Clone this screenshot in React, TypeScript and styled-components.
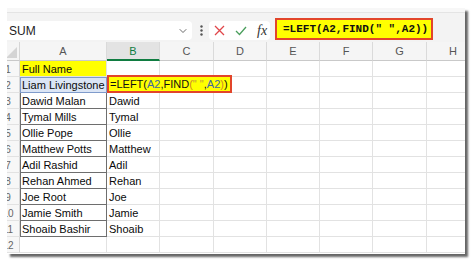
import { FC } from 'react';
import styled, { createGlobalStyle } from 'styled-components';
import { ChevronDown } from 'lucide-react';

const GlobalStyle = createGlobalStyle`
  html, body {
    margin: 0;
    padding: 0;
    background: #ffffff;
  }
  body {
    font-family: "Liberation Sans", Arial, sans-serif;
    width: 474px;
    height: 264px;
    overflow: hidden;
  }
`;

const GRID_LINE = '#e2e2e2';
const BOX_LINE = '#6e6e6e';

const Frame = styled.div`
  margin: 8px 0 0 7px;
  width: 458px;
  height: 246px;
  background: #ffffff;
  overflow: hidden;
  box-shadow: 3px 3px 2px rgba(0, 0, 0, 0.6);
`;

const TopStrip = styled.div`
  height: 4px;
  background: #f7f7f7;
  border-bottom: 1px solid #e4e4e4;
`;

const Toolbar = styled.div`
  display: flex;
  align-items: flex-end;
  height: 29px;
  box-sizing: border-box;
  padding-bottom: 2px;
  background: #f3f3f3;
`;

const NameBox = styled.div`
  display: flex;
  align-items: center;
  justify-content: space-between;
  margin-left: -6px;
  width: 191px;
  height: 19px;
  box-sizing: border-box;
  padding: 0 3px 0 8px;
  background: #ffffff;
  border-radius: 4px;
  font-size: 12px;
  color: #222;
`;

const Dots = styled.div`
  display: flex;
  align-items: center;
  justify-content: center;
  width: 6px;
  height: 19px;
  margin-left: 6px;
`;

const ActionBox = styled.div`
  display: flex;
  align-items: center;
  margin-left: 5px;
  width: 61px;
  height: 19px;
  box-sizing: border-box;
  padding-left: 5px;
  gap: 10px;
  background: #ffffff;
  border-radius: 4px;
`;

const Fx = styled.span`
  font-family: "Liberation Serif", "Times New Roman", serif;
  font-style: italic;
  font-size: 14px;
  color: #333;
  line-height: 1;
`;

const FormulaInput = styled.div`
  display: flex;
  align-items: center;
  margin-left: 5px;
  width: 158px;
  height: 22px;
  box-sizing: border-box;
  padding-left: 6px;
  background: #ffff00;
  border: 2px solid #e2452a;
  font-family: "Liberation Mono", "Courier New", monospace;
  font-weight: bold;
  font-size: 11px;
  color: #111;
  white-space: pre;
`;

const Sheet = styled.div`
  display: grid;
  grid-template-columns: 23px 87px 53px 54px 53px 53px 53px 54px 53px;
  grid-template-rows: 19px repeat(12, 16px);
  margin-left: -10px;
  width: 483px;
`;

const Corner = styled.div`
  position: relative;
  background: #f5f5f5;
  border-right: 1px solid #d6d6d6;
  border-bottom: 1px solid #c9c9c9;

  &::after {
    content: '';
    position: absolute;
    right: 2px;
    bottom: 2px;
    border-left: 11px solid transparent;
    border-bottom: 11px solid #d4d4d4;
  }
`;

const ColHead = styled.div<{ $active?: boolean }>`
  display: flex;
  align-items: center;
  justify-content: center;
  box-sizing: border-box;
  font-size: 11px;
  background: ${({ $active }) => ($active ? '#e3e3e3' : '#f5f5f5')};
  color: ${({ $active }) => ($active ? '#107c41' : '#555')};
  border-right: 1px solid #dadada;
  border-bottom: ${({ $active }) => ($active ? '2px solid #107c41' : '1px solid #c9c9c9')};
`;

const RowHead = styled.div`
  box-sizing: border-box;
  padding-top: 2px;
  text-align: center;
  font-size: 10px;
  line-height: 13px;
  color: #666;
  background: #f7f7f7;
  border-right: 1px solid #d6d6d6;
  border-bottom: 1px solid ${GRID_LINE};
`;

type CellVariant = 'plain' | 'header' | 'ref' | 'boxed';

const Cell = styled.div<{ $variant?: CellVariant }>`
  box-sizing: border-box;
  padding: 2px 0 0 2px;
  font-size: 11px;
  line-height: 13px;
  color: #0a0a0a;
  white-space: nowrap;
  border-right: 1px solid ${GRID_LINE};
  border-bottom: 1px solid ${GRID_LINE};
  ${({ $variant }) =>
    $variant === 'header' &&
    `
    background: #ffff00;
  `}
  ${({ $variant }) =>
    $variant === 'ref' &&
    `
    background: #dbe5f5;
    border: 1px solid #7f9bcb;
    padding: 1px 0 0 1px;
  `}
  ${({ $variant }) =>
    $variant === 'boxed' &&
    `
    border-left: 1px solid ${BOX_LINE};
    border-right: 1px solid ${BOX_LINE};
    border-bottom: 1px solid ${BOX_LINE};
    padding-left: 1px;
  `}
`;

const EditCell = styled(Cell)`
  position: relative;
  z-index: 1;
  padding: 0;
  overflow: visible;
`;

const Highlight = styled.span`
  display: inline-block;
  margin-top: -2px;
  height: 18px;
  box-sizing: border-box;
  padding: 1px 2px 0 1px;
  background: #ffff00;
  border: 2px solid #e2452a;
  line-height: 13px;
`;

const Tok = styled.span<{ $c: string }>`
  color: ${({ $c }) => $c};
`;

const columns = ['A', 'B', 'C', 'D', 'E', 'F', 'G', 'H'];

const names = [
  ['Full Name', ''],
  ['Liam Livingstone', ''],
  ['Dawid Malan', 'Dawid'],
  ['Tymal Mills', 'Tymal'],
  ['Ollie Pope', 'Ollie'],
  ['Matthew Potts', 'Matthew'],
  ['Adil Rashid', 'Adil'],
  ['Rehan Ahmed', 'Rehan'],
  ['Joe Root', 'Joe'],
  ['Jamie Smith', 'Jamie'],
  ['Shoaib Bashir', 'Shoaib'],
  ['', ''],
];

const XIcon = () => (
  <svg width="11" height="11" viewBox="0 0 11 11">
    <path d="M1 1 L10 10 M10 1 L1 10" stroke="#e0464a" strokeWidth="1.3" fill="none" />
  </svg>
);

const CheckIcon = () => (
  <svg width="12" height="10" viewBox="0 0 12 10">
    <path d="M1 5 L4.5 8.5 L11 1" stroke="#4a9e5c" strokeWidth="1.3" fill="none" />
  </svg>
);

const DotsIcon = () => (
  <svg width="3" height="11" viewBox="0 0 3 11">
    <circle cx="1.5" cy="1.5" r="1.2" fill="#555" />
    <circle cx="1.5" cy="5.5" r="1.2" fill="#555" />
    <circle cx="1.5" cy="9.5" r="1.2" fill="#555" />
  </svg>
);

const FormulaText: FC = () => (
  <Highlight>
    <Tok $c="#111">=LEFT(</Tok>
    <Tok $c="#41699f">A2</Tok>
    <Tok $c="#111">,FIND</Tok>
    <Tok $c="#d0862a">(</Tok>
    <Tok $c="#c49a3a">" "</Tok>
    <Tok $c="#111">,</Tok>
    <Tok $c="#41699f">A2</Tok>
    <Tok $c="#d0862a">)</Tok>
    <Tok $c="#111">)</Tok>
  </Highlight>
);

const variantFor = (row: number): CellVariant => {
  if (row === 0) return 'header';
  if (row === 1) return 'ref';
  if (row <= 10) return 'boxed';
  return 'plain';
};

type RowProps = { index: number; full: string; first: string };

const Row: FC<RowProps> = ({ index, full, first }) => (
  <>
    <RowHead>{index + 1}</RowHead>
    <Cell $variant={variantFor(index)}>{full}</Cell>
    {index === 1 ? (
      <EditCell>
        <FormulaText />
      </EditCell>
    ) : (
      <Cell>{first}</Cell>
    )}
    {columns.slice(2).map((c) => (
      <Cell key={c} />
    ))}
  </>
);

const App = () => (
  <>
    <GlobalStyle />
    <Frame>
      <TopStrip />
      <Toolbar>
        <NameBox>
          <span>SUM</span>
          <ChevronDown size={12} color="#444" strokeWidth={1.6} />
        </NameBox>
        <Dots>
          <DotsIcon />
        </Dots>
        <ActionBox>
          <XIcon />
          <CheckIcon />
          <Fx>fx</Fx>
        </ActionBox>
        <FormulaInput>=LEFT(A2,FIND(" ",A2))</FormulaInput>
      </Toolbar>
      <Sheet>
        <Corner />
        {columns.map((c) => (
          <ColHead key={c} $active={c === 'B'}>
            {c}
          </ColHead>
        ))}
        {names.map(([full, first], r) => (
          <Row key={r} index={r} full={full} first={first} />
        ))}
      </Sheet>
    </Frame>
  </>
);

export default App;
